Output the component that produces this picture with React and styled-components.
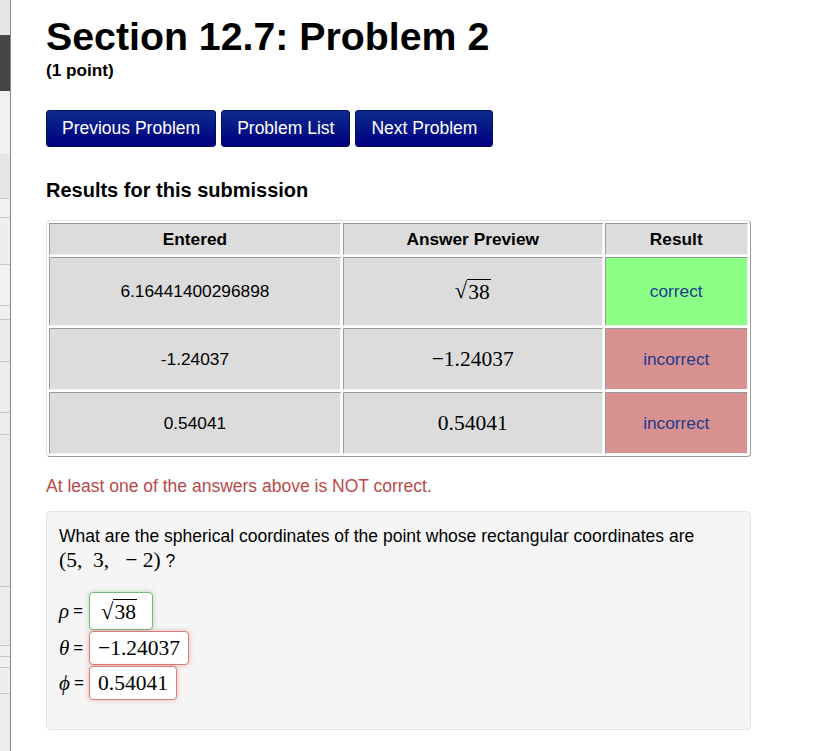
import React from 'react';
import styled, { createGlobalStyle } from 'styled-components';

const GlobalStyle = createGlobalStyle`
  html, body { margin: 0; padding: 0; background: #fff; }
  body { font-family: "Liberation Sans", Arial, sans-serif; color: #000; }
`;

const Page = styled.div`
  display: flex;
  min-height: 751px;
`;

const Strip = styled.div`
  width: 10px;
  flex: none;
  border-right: 1px solid #8a8a8a;
  background: #ececec;
  display: flex;
  flex-direction: column;
`;

const StripBand = styled.div`
  height: ${p => p.$h}px;
  background: ${p => p.$bg || '#eeeeee'};
  border-bottom: ${p => (p.$line ? '1px solid #c8c8c8' : 'none')};
  flex: none;
`;

const Main = styled.div`
  flex: 1;
  padding: 14px 0 0 35px;
`;

const Title = styled.h1`
  margin: 0;
  font-size: 39.3px;
  font-weight: bold;
  line-height: 44px;
`;

const Points = styled.div`
  font-size: 17.2px;
  font-weight: bold;
  margin-top: 2px;
`;

const NavBar = styled.div`
  display: flex;
  gap: 5px;
  margin-top: 29px;
`;

const NavButton = styled.button`
  height: 37px;
  padding: 0 15px;
  border: 1px solid #00105a;
  border-radius: 3px;
  background: linear-gradient(#0d2c8e, #00007f);
  color: #fff;
  font-family: "Liberation Sans", Arial, sans-serif;
  font-size: 17.5px;
`;

const SubHead = styled.h2`
  margin: 31px 0 0;
  font-size: 20px;
  font-weight: bold;
  line-height: 24px;
`;

const ResultTable = styled.table`
  margin-top: 18px;
  width: 705px;
  border-collapse: separate;
  border-spacing: 2px;
  border: 1px solid;
  border-color: #e2e2e2 #9a9a9a #9a9a9a #e2e2e2;
  border-radius: 4px;
  font-size: 17.3px;
`;

const HeadCell = styled.th`
  background: #dcdcdc;
  border: 1px solid;
  border-color: #9a9a9a #f4f4f4 #f4f4f4 #9a9a9a;
  height: 30px;
  padding: 0;
  font-weight: bold;
  text-align: center;
  width: ${p => p.$w}px;
`;

const Cell = styled.td`
  background: #dcdcdc;
  border: 1px solid;
  border-color: #9a9a9a #f4f4f4 #f4f4f4 #9a9a9a;
  height: ${p => p.$h}px;
  padding: 0;
  text-align: center;
`;

const ResultCell = styled(Cell)`
  background: ${p => (p.$ok ? '#8cff87' : '#d69190')};
  color: #22398c;
`;

const Tex = styled.span`
  font-family: "Liberation Serif", "Times New Roman", serif;
  font-size: ${p => p.$size || 21.5}px;
`;

const Radical = styled.span`
  display: inline-flex;
  align-items: flex-end;
`;

const RootSign = styled.span`
  font-size: 1.05em;
  line-height: 1;
`;

const Radicand = styled.span`
  border-top: 1px solid #000;
  padding: 2px 1px 0 1px;
  line-height: 1;
`;

const Warning = styled.div`
  margin-top: 19px;
  color: #b94a48;
  font-size: 17.5px;
`;

const ProblemBox = styled.div`
  margin-top: 14px;
  width: 705px;
  box-sizing: border-box;
  min-height: 219px;
  background: #f5f5f5;
  border: 1px solid #e3e3e3;
  border-radius: 4px;
  padding: 12px 12px;
  font-size: 17.5px;
`;

const Question = styled.p`
  margin: 0;
  line-height: 24px;
`;

const Answers = styled.div`
  margin-top: 19px;
  display: flex;
  flex-direction: column;
  gap: 1px;
`;

const AnswerRow = styled.div`
  display: flex;
  align-items: center;
  gap: 5px;
`;

const Label = styled.span`
  font-family: "Liberation Serif", "Times New Roman", serif;
  font-style: italic;
  font-size: 21px;
  display: inline-flex;
  align-items: center;
  gap: 4px;
  width: 25px;
`;

const Eq = styled.span`
  font-family: "Liberation Sans", Arial, sans-serif;
  font-style: normal;
  font-size: 17px;
`;

const AnswerBox = styled.div`
  background: #fff;
  border: 1px solid ${p => (p.$ok ? '#79b879' : '#d97c7c')};
  box-shadow: 0 0 5px ${p => (p.$ok ? 'rgba(60,160,60,0.35)' : 'rgba(200,60,60,0.35)')};
  border-radius: 4px;
  height: ${p => (p.$tall ? 38 : 34)}px;
  box-sizing: border-box;
  padding: ${p => (p.$tall ? '2px 15px 0 11px' : '0 8px')};
  display: flex;
  align-items: center;
`;

const rows = [
  { entered: '6.16441400296898', preview: 'sqrt', ok: true, h: 67 },
  { entered: '-1.24037', preview: '\u22121.24037', ok: false, h: 60 },
  { entered: '0.54041', preview: '0.54041', ok: false, h: 60 },
];

const Sqrt38 = ({ size }) => (
  <Tex $size={size}>
    <Radical>
      <RootSign>√</RootSign>
      <Radicand>38</Radicand>
    </Radical>
  </Tex>
);

const stripBands = [
  [35, '#e6e6e6'], [56, '#454545'], [63, '#f1f1f1'], [44, '#e7e5e5', true],
  [18, '#f1f1f1', true], [46, '#eeeeee', true], [40, '#f1f1f1', true],
  [13, '#eeeeee', true], [41, '#ebebeb', true], [50, '#ececec', true],
  [21, '#ececec', true], [151, '#eaeaea', true], [58, '#ececec', true],
  [10, '#efefef', true], [10, '#efefef', true], [25, '#eeeeee', true],
];

export default function App() {
  return (
    <>
      <GlobalStyle />
      <Page>
        <Strip>
          {stripBands.map(([h, bg, line], i) => (
            <StripBand key={i} $h={h} $bg={bg} $line={line} />
          ))}
        </Strip>
        <Main>
          <Title>Section 12.7: Problem 2</Title>
          <Points>(1 point)</Points>

          <NavBar>
            <NavButton>Previous Problem</NavButton>
            <NavButton>Problem List</NavButton>
            <NavButton>Next Problem</NavButton>
          </NavBar>

          <SubHead>Results for this submission</SubHead>

          <ResultTable>
            <thead>
              <tr>
                <HeadCell $w={289}>Entered</HeadCell>
                <HeadCell $w={257}>Answer Preview</HeadCell>
                <HeadCell $w={141}>Result</HeadCell>
              </tr>
            </thead>
            <tbody>
              {rows.map(r => (
                <tr key={r.entered}>
                  <Cell $h={r.h}>{r.entered}</Cell>
                  <Cell $h={r.h}>
                    {r.preview === 'sqrt' ? <Sqrt38 /> : <Tex>{r.preview}</Tex>}
                  </Cell>
                  <ResultCell $h={r.h} $ok={r.ok}>{r.ok ? 'correct' : 'incorrect'}</ResultCell>
                </tr>
              ))}
            </tbody>
          </ResultTable>

          <Warning>At least one of the answers above is NOT correct.</Warning>

          <ProblemBox>
            <Question>
              What are the spherical coordinates of the point whose rectangular coordinates are
              <br />
              <Tex>(5,&nbsp; 3,&nbsp; &nbsp;&minus; 2)</Tex> ?
            </Question>

            <Answers>
              <AnswerRow>
                <Label>ρ<Eq>=</Eq></Label>
                <AnswerBox $ok $tall>
                  <Sqrt38 />
                </AnswerBox>
              </AnswerRow>
              <AnswerRow>
                <Label>θ<Eq>=</Eq></Label>
                <AnswerBox>
                  <Tex>&minus;1.24037</Tex>
                </AnswerBox>
              </AnswerRow>
              <AnswerRow>
                <Label>ϕ<Eq>=</Eq></Label>
                <AnswerBox>
                  <Tex>0.54041</Tex>
                </AnswerBox>
              </AnswerRow>
            </Answers>
          </ProblemBox>
        </Main>
      </Page>
    </>
  );
}
